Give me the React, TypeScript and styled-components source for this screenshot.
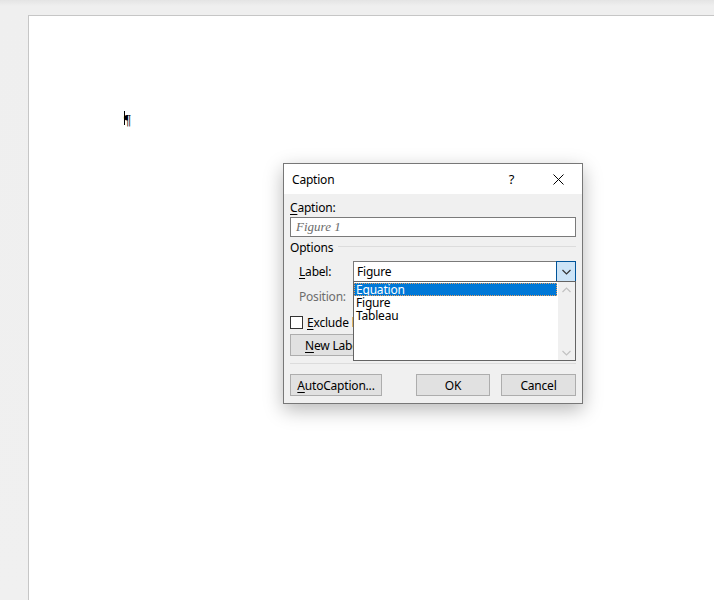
import React from 'react';
import styled, {createGlobalStyle} from 'styled-components';

const GlobalStyle = createGlobalStyle`
  html, body {
    margin: 0;
    padding: 0;
    height: 100%;
    overflow: hidden;
  }
  body {
    background: #f0f0f0;
    font-family: "Noto Sans", "DejaVu Sans", sans-serif;
  }
`;

const Workspace = styled.div`
  position: relative;
  width: 714px;
  height: 600px;
  background: linear-gradient(#e4e4e4 0, #efefef 6px, #f0f0f0 100%);
  padding: 15px 0 0 28px;
  box-sizing: border-box;
`;

const Page = styled.div`
  height: 100%;
  background: #fff;
  border-top: 1px solid #c6c6c6;
  border-left: 1px solid #c6c6c6;
  padding: 95px 0 0 95px;
  box-sizing: border-box;
`;

const Cursor = styled.div`
  position: relative;
  width: 10px;
  height: 18px;
  .bar {
    position: absolute;
    left: 0;
    top: 0;
    width: 1px;
    height: 14px;
    background: #000;
  }
  .mark {
    position: absolute;
    left: 0;
    top: 1px;
    font-family: "Liberation Serif", serif;
    font-size: 15px;
    line-height: 17px;
    color: #000;
  }
`;

const Dialog = styled.div`
  position: absolute;
  left: 283px;
  top: 163px;
  width: 300px;
  height: 241px;
  box-sizing: border-box;
  border: 1px solid #777;
  background: #f0f0f0;
  box-shadow: 0 6px 18px rgba(0, 0, 0, 0.28);
  display: flex;
  flex-direction: column;
  font-size: 12px;
  letter-spacing: -0.2px;
  color: #000;
`;

const TitleBar = styled.div`
  height: 30px;
  background: #fff;
  display: flex;
  align-items: center;
  padding-left: 8px;
  font-size: 12px;
  span.title {
    flex: 1;
  }
`;

const TitleButton = styled.div<{ $gap: number }>`
  width: 37px;
  height: 30px;
  margin-right: ${p => p.$gap}px;
  display: flex;
  align-items: center;
  justify-content: center;
  font-size: 13px;
`;

const Body = styled.div`
  flex: 1;
  padding: 5px 6px 0 6px;
  display: flex;
  flex-direction: column;
`;

const Text = styled.div<{ $disabled?: boolean }>`
  height: 17px;
  line-height: 17px;
  white-space: nowrap;
  color: ${p => (p.$disabled ? '#6d6d6d' : '#000')};
  u {
    text-decoration: underline;
    text-underline-offset: 2px;
  }
`;

const TextBox = styled.div`
  margin-top: 1px;
  height: 20px;
  box-sizing: border-box;
  border: 1px solid #7a7a7a;
  background: #fff;
  padding-left: 5px;
  font-family: "Liberation Serif", serif;
  font-style: italic;
  font-size: 13px;
  letter-spacing: 0;
  line-height: 18px;
  color: #6b6b6b;
`;

const GroupHeader = styled.div`
  margin-top: 2px;
  display: flex;
  align-items: center;
  gap: 5px;
  height: 17px;
  &::after {
    content: '';
    flex: 1;
    height: 1px;
    margin-top: -2px;
    background: #dcdcdc;
  }
`;

const FieldRow = styled.div<{ $top: number }>`
  display: flex;
  align-items: center;
  padding-left: 9px;
  margin-top: ${p => p.$top}px;
  height: 21px;
  ${Text} {
    width: 54px;
  }
`;

const ComboWrap = styled.div`
  position: relative;
  flex: 1;
`;

const Combo = styled.div`
  height: 21px;
  box-sizing: border-box;
  border: 1px solid #7a7a7a;
  background: #fff;
  display: flex;
  align-items: stretch;
  .value {
    flex: 1;
    padding-left: 3px;
    line-height: 19px;
  }
`;

const DropButton = styled.div`
  width: 18px;
  margin: -1px -1px -1px 0;
  background: #cce4f7;
  border: 1px solid #005499;
  display: flex;
  align-items: center;
  justify-content: center;
`;

const ListBox = styled.div`
  position: absolute;
  left: 0;
  right: 0;
  top: 20px;
  height: 80px;
  box-sizing: border-box;
  border: 1px solid #646464;
  background: #fff;
  display: flex;
  z-index: 5;
`;

const Items = styled.div`
  flex: 1;
  padding-top: 1px;
`;

const Item = styled.div<{ $selected?: boolean }>`
  height: 13px;
  line-height: 13px;
  padding-left: 2px;
  margin-right: 1px;
  box-sizing: border-box;
  color: ${p => (p.$selected ? '#fff' : '#000')};
  background: ${p => (p.$selected ? '#0078d7' : 'transparent')};
  outline: ${p => (p.$selected ? '1px dotted #e8a060' : 'none')};
  outline-offset: -1px;
`;

const ScrollBar = styled.div`
  width: 17px;
  background: #f0f0f0;
  display: flex;
  flex-direction: column;
  justify-content: space-between;
  align-items: center;
  padding: 5px 0 4px;
`;

const CheckRow = styled.div`
  margin-top: 8px;
  display: flex;
  align-items: center;
  gap: 4px;
  height: 15px;
`;

const CheckBox = styled.div`
  width: 13px;
  height: 13px;
  box-sizing: border-box;
  border: 1px solid #333;
  background: #fff;
`;

const Button = styled.div<{ $width: number }>`
  width: ${p => p.$width}px;
  height: 22px;
  box-sizing: border-box;
  border: 1px solid #adadad;
  background: #e1e1e1;
  display: flex;
  align-items: center;
  justify-content: center;
  white-space: nowrap;
  u {
    text-underline-offset: 2px;
  }
`;

const LeftButton = styled(Button)`
  justify-content: flex-start;
  padding-left: 14px;
  margin-top: 4px;
`;

const Separator = styled.div`
  margin-top: 7px;
  height: 1px;
  background: #dcdcdc;
`;

const ButtonRow = styled.div`
  margin-top: 10px;
  display: flex;
  gap: 11px;
  .spacer {
    flex: 1;
  }
`;

const Chevron = ({ up, color }: { up?: boolean; color: string }) => (
  <svg width="9" height="6" viewBox="0 0 9 6">
    <path
      d={up ? 'M0.5 5 L4.5 1 L8.5 5' : 'M0.5 1 L4.5 5 L8.5 1'}
      fill="none"
      stroke={color}
      strokeWidth="1.2"
    />
  </svg>
);

const CloseIcon = () => (
  <svg width="11" height="11" viewBox="0 0 11 11">
    <path d="M0.5 0.5 L10.5 10.5 M10.5 0.5 L0.5 10.5" stroke="#000" strokeWidth="1" />
  </svg>
);

const App = () => {
  return (
    <>
      <GlobalStyle />
      <Workspace>
        <Page>
          <Cursor>
            <div className="bar" />
            <div className="mark">¶</div>
          </Cursor>
        </Page>
        <Dialog>
          <TitleBar>
            <span className="title">Caption</span>
            <TitleButton $gap={10}>?</TitleButton>
            <TitleButton $gap={5}>
              <CloseIcon />
            </TitleButton>
          </TitleBar>
          <Body>
            <Text>
              <u>C</u>aption:
            </Text>
            <TextBox>Figure 1</TextBox>
            <GroupHeader>Options</GroupHeader>
            <FieldRow $top={5}>
              <Text>
                <u>L</u>abel:
              </Text>
              <ComboWrap>
                <Combo>
                  <span className="value">Figure</span>
                  <DropButton>
                    <Chevron color="#333" />
                  </DropButton>
                </Combo>
                <ListBox>
                  <Items>
                    <Item $selected>Equation</Item>
                    <Item>Figure</Item>
                    <Item>Tableau</Item>
                  </Items>
                  <ScrollBar>
                    <Chevron up color="#c2c2c2" />
                    <Chevron color="#c2c2c2" />
                  </ScrollBar>
                </ListBox>
              </ComboWrap>
            </FieldRow>
            <FieldRow $top={4}>
              <Text $disabled>Position:</Text>
            </FieldRow>
            <CheckRow>
              <CheckBox />
              <Text>
                <u>E</u>xclude label from caption
              </Text>
            </CheckRow>
            <LeftButton $width={100}>
              <span>
                <u>N</u>ew Label...
              </span>
            </LeftButton>
            <Separator />
            <ButtonRow>
              <Button $width={92}>
                <span>
                  <u>A</u>utoCaption...
                </span>
              </Button>
              <div className="spacer" />
              <Button $width={74}>OK</Button>
              <Button $width={75}>Cancel</Button>
            </ButtonRow>
          </Body>
        </Dialog>
      </Workspace>
    </>
  );
};

export default App;
